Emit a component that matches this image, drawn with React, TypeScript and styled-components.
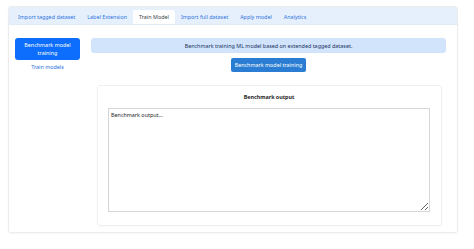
import styled, { createGlobalStyle } from 'styled-components';

const GlobalStyle = createGlobalStyle`
  html, body {
    margin: 0;
    padding: 0;
    background: #ffffff;
    font-family: "Noto Sans", "Open Sans", sans-serif;
  }
`;

const Page = styled.div`
  padding: 6px 16px 15px 8px;
`;

const Card = styled.div`
  border: 1px solid #ececec;
  border-radius: 3px;
  box-shadow: 0 1px 2px rgba(0, 0, 0, 0.04);
  overflow: hidden;
`;

const TabBar = styled.div`
  display: flex;
  align-items: flex-end;
  height: 17px;
  padding-left: 3px;
  background-color: #e6f0fc;
  border-bottom: 1px solid #e3ebf5;
`;

const Tab = styled.div<{ $active?: boolean }>`
  height: 14px;
  display: flex;
  align-items: center;
  padding: 0 6px;
  font-size: 5.4px;
  color: ${(p) => (p.$active ? '#3d4349' : '#2f74dc')};
  background-color: ${(p) => (p.$active ? '#ffffff' : 'transparent')};
  border-radius: 2px 2px 0 0;
  white-space: nowrap;
`;

const Body = styled.div`
  display: grid;
  grid-template-columns: 65px 1fr;
  column-gap: 11px;
  padding: 13px 11px 6px 6px;
`;

const Nav = styled.div`
  display: flex;
  flex-direction: column;
  align-items: stretch;
  gap: 0;
`;

const NavItem = styled.div<{ $active?: boolean }>`
  padding: 3px 4px;
  border-radius: 3px;
  text-align: center;
  font-size: 5.4px;
  line-height: 8px;
  color: ${(p) => (p.$active ? '#ffffff' : '#2a6fdc')};
  background-color: ${(p) => (p.$active ? '#0d6efd' : 'transparent')};
`;

const Main = styled.div`
  display: flex;
  flex-direction: column;
  align-items: stretch;
`;

const Alert = styled.div`
  height: 15px;
  display: flex;
  align-items: center;
  justify-content: center;
  background-color: #d2e3fc;
  border-radius: 3px;
  font-size: 5.4px;
  color: #16335c;
`;

const ActionRow = styled.div`
  display: flex;
  justify-content: center;
  margin-top: 5px;
`;

const Button = styled.button`
  height: 14px;
  padding: 0 4px;
  border: none;
  border-radius: 2px;
  background-color: #2a7dd2;
  color: #ffffff;
  font-family: inherit;
  font-size: 5.4px;
`;

const OutputCard = styled.div`
  margin: 13px 4px 0 6px;
  padding: 7px 11px 13px 10px;
  border: 1px solid #efefef;
  border-radius: 3px;
  box-shadow: 0 1px 2px rgba(0, 0, 0, 0.03);
  display: flex;
  flex-direction: column;
  align-items: stretch;
`;

const OutputTitle = styled.div`
  text-align: center;
  font-size: 5.4px;
  font-weight: 700;
  color: #1e1e1e;
  margin-bottom: 7px;
`;

const OutputArea = styled.textarea`
  height: 104px;
  box-sizing: border-box;
  padding: 2px;
  border: 1px solid #d6d6d6;
  font-family: inherit;
  font-size: 5.4px;
  color: #1e1e1e;
  resize: vertical;

  &::placeholder {
    color: #1e1e1e;
  }
`;

const tabs = [
  'Import tagged dataset',
  'Label Extension',
  'Train Model',
  'Import full dataset',
  'Apply model',
  'Analytics',
];

export default function App() {
  return (
    <>
      <GlobalStyle />
      <Page>
        <Card>
          <TabBar>
            {tabs.map((t) => (
              <Tab key={t} $active={t === 'Train Model'}>
                {t}
              </Tab>
            ))}
          </TabBar>
          <Body>
            <Nav>
              <NavItem $active>
                Benchmark model
                <br />
                training
              </NavItem>
              <NavItem>Train models</NavItem>
            </Nav>
            <Main>
              <Alert>Benchmark training ML model based on extended tagged dataset.</Alert>
              <ActionRow>
                <Button>Benchmark model training</Button>
              </ActionRow>
              <OutputCard>
                <OutputTitle>Benchmark output</OutputTitle>
                <OutputArea placeholder="Benchmark output..." />
              </OutputCard>
            </Main>
          </Body>
        </Card>
      </Page>
    </>
  );
}
